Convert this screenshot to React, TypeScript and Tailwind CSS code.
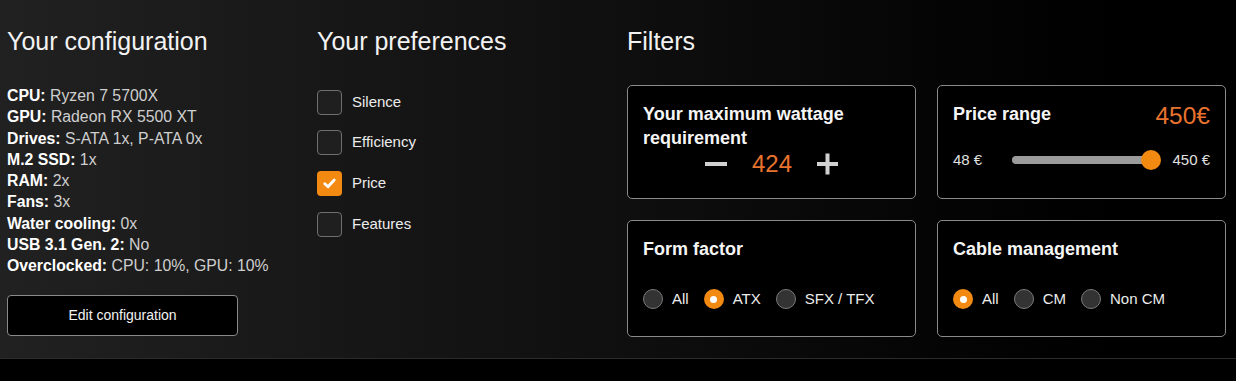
import React from "react";

const font = { fontFamily: '"Liberation Sans", Arial, sans-serif' };

const config: [string, string][] = [
  ["CPU:", "Ryzen 7 5700X"],
  ["GPU:", "Radeon RX 5500 XT"],
  ["Drives:", "S-ATA 1x, P-ATA 0x"],
  ["M.2 SSD:", "1x"],
  ["RAM:", "2x"],
  ["Fans:", "3x"],
  ["Water cooling:", "0x"],
  ["USB 3.1 Gen. 2:", "No"],
  ["Overclocked:", "CPU: 10%, GPU: 10%"],
];

const prefs = [
  { label: "Silence", checked: false },
  { label: "Efficiency", checked: false },
  { label: "Price", checked: true },
  { label: "Features", checked: false },
];

const Heading = ({ children }: { children: React.ReactNode }) => (
  <h2 className="text-[25px] leading-[30px] text-[#f2f2f2] font-normal">{children}</h2>
);

const Checkbox = ({ label, checked }: { label: string; checked: boolean }) => (
  <div className="flex items-center h-6 gap-[10px]">
    {checked ? (
      <span className="flex items-center justify-center w-[25px] h-[25px] rounded-[4px] bg-[#f28a12]">
        <svg width="13" height="11" viewBox="0 0 13 11" fill="none">
          <path d="M1.8 5.8 L5 8.8 L11.2 2" stroke="#fff" strokeWidth="2.8" strokeLinecap="round" strokeLinejoin="round" />
        </svg>
      </span>
    ) : (
      <span className="w-[25px] h-[25px] rounded-[4px] border border-[#6f6f6f] bg-[#1f1f1f]" />
    )}
    <span className="text-[15px] text-[#ececec]">{label}</span>
  </div>
);

const Radio = ({ label, checked }: { label: string; checked: boolean }) => (
  <div className="flex items-center gap-[9px]">
    {checked ? (
      <span className="flex items-center justify-center w-5 h-5 rounded-full bg-[#f28a12]">
        <span className="w-[7px] h-[7px] rounded-full bg-white" />
      </span>
    ) : (
      <span className="w-5 h-5 rounded-full border border-[#7a7a7a] bg-[#333333]" />
    )}
    <span className="text-[15px] text-[#ececec]">{label}</span>
  </div>
);

const Card = ({ children, className }: { children: React.ReactNode; className: string }) => (
  <div className={`rounded-[5px] border border-[#8a8a8a] bg-black px-[15px] pt-4 ${className}`}>
    {children}
  </div>
);

const CardTitle = ({ children }: { children: React.ReactNode }) => (
  <h3 className="text-[18px] leading-6 font-bold text-[#f5f5f5]">{children}</h3>
);

export default function App() {
  return (
    <div className="min-h-screen bg-black" style={font}>
      <section className="h-[359px] border-b border-[#2c2c2c] bg-[linear-gradient(to_right,#212121_0%,#161616_30%,#0f0f0f_50%,#050505_75%,#000_90%)] pl-[7px] pt-[26px] flex">
        {/* Configuration */}
        <div className="w-[310px] flex flex-col">
          <Heading>Your configuration</Heading>
          <ul className="mt-[29px] text-[15.8px] leading-[21.25px]">
            {config.map(([k, v]) => (
              <li key={k}>
                <span className="font-bold text-white">{k}</span>{" "}
                <span className="text-[#cfcfcf]">{v}</span>
              </li>
            ))}
          </ul>
          <button className="mt-[19px] w-[231px] h-[41px] rounded-[4px] border border-[#8a8a8a] bg-black text-[14px] text-[#f2f2f2]">
            Edit configuration
          </button>
        </div>

        {/* Preferences */}
        <div className="w-[310px] flex flex-col">
          <Heading>Your preferences</Heading>
          <div className="mt-[34px] flex flex-col gap-[16.7px]">
            {prefs.map((p) => (
              <Checkbox key={p.label} {...p} />
            ))}
          </div>
        </div>

        {/* Filters */}
        <div className="w-[599px] flex flex-col">
          <Heading>Filters</Heading>
          <div className="mt-[29px] grid grid-cols-2 gap-x-[21px] gap-y-[21px]">
            <Card className="h-[114px]">
              <CardTitle>
                Your maximum wattage
                <br />
                requirement
              </CardTitle>
              <div className="flex items-center justify-center gap-[25px]">
                <svg width="22" height="22" viewBox="0 0 22 22">
                  <rect x="0" y="9" width="22" height="4" fill="#d0d0d0" />
                </svg>
                <span className="text-[24px] leading-7 text-[#e8732e]">424</span>
                <svg width="21" height="22" viewBox="0 0 21 22">
                  <rect x="0" y="9" width="21" height="4" fill="#d0d0d0" />
                  <rect x="8.5" y="0.5" width="4" height="21" fill="#d0d0d0" />
                </svg>
              </div>
            </Card>

            <Card className="h-[114px]">
              <div className="flex items-start justify-between">
                <CardTitle>Price range</CardTitle>
                <span className="text-[24.5px] leading-7 text-[#e8732e]">450€</span>
              </div>
              <div className="mt-5 flex items-center h-5 text-[15px] text-[#e0e0e0]">
                <span>48 €</span>
                <div className="relative ml-[30px] flex-1 h-5 flex items-center">
                  <div className="h-[8px] w-full mr-[8px] rounded-full bg-[#9b9b9b]" />
                  <span className="absolute right-0 top-0 w-5 h-5 rounded-full bg-[#f28a12]" />
                </div>
                <span className="ml-[11px]">450 €</span>
              </div>
            </Card>

            <Card className="h-[117px]">
              <CardTitle>Form factor</CardTitle>
              <div className="mt-[27px] flex items-center gap-[15px]">
                <Radio label="All" checked={false} />
                <Radio label="ATX" checked />
                <Radio label="SFX / TFX" checked={false} />
              </div>
            </Card>

            <Card className="h-[117px]">
              <CardTitle>Cable management</CardTitle>
              <div className="mt-[27px] flex items-center gap-[15px]">
                <Radio label="All" checked />
                <Radio label="CM" checked={false} />
                <Radio label="Non CM" checked={false} />
              </div>
            </Card>
          </div>
        </div>
      </section>
    </div>
  );
}
